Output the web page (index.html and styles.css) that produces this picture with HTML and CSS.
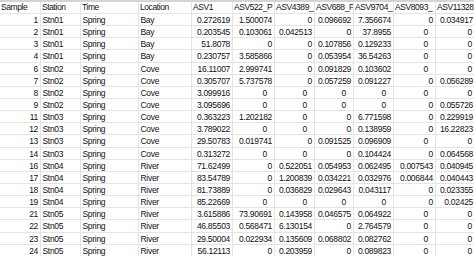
FILE: index.html
```html
<!DOCTYPE html>
<html>
<head>
<meta charset="utf-8">
<link rel="stylesheet" href="styles.css">
</head>
<body>
<div class="topbar"></div>
<div class="sheet">
  <div class="row hdr"><div>Sample</div><div>Station</div><div>Time</div><div>Location</div><div>ASV1</div><div>ASV522_P</div><div>ASV4389_</div><div>ASV688_P</div><div>ASV9704_</div><div>ASV8093_</div><div>ASV11328</div></div>
  <div class="row"><div class="n">1</div><div>Stn01</div><div>Spring</div><div>Bay</div><div class="n">0.272619</div><div class="n">1.500074</div><div class="n">0</div><div class="n">0.096692</div><div class="n">7.356674</div><div class="n">0</div><div class="n">0.034917</div></div>
  <div class="row"><div class="n">2</div><div>Stn01</div><div>Spring</div><div>Bay</div><div class="n">0.203545</div><div class="n">0.103061</div><div class="n">0.042513</div><div class="n">0</div><div class="n">37.8955</div><div class="z">0</div><div class="z">0</div></div>
  <div class="row"><div class="n">3</div><div>Stn01</div><div>Spring</div><div>Bay</div><div class="n">51.8078</div><div class="n">0</div><div class="n">0</div><div class="n">0.107856</div><div class="n">0.129233</div><div class="z">0</div><div class="z">0</div></div>
  <div class="row"><div class="n">4</div><div>Stn01</div><div>Spring</div><div>Bay</div><div class="n">0.230757</div><div class="n">3.585866</div><div class="n">0</div><div class="n">0.053954</div><div class="n">36.54263</div><div class="z">0</div><div class="z">0</div></div>
  <div class="row"><div class="n">6</div><div>Stn02</div><div>Spring</div><div>Cove</div><div class="n">16.11007</div><div class="n">2.999741</div><div class="n">0</div><div class="n">0.091829</div><div class="n">0.103602</div><div class="z">0</div><div class="z">0</div></div>
  <div class="row"><div class="n">7</div><div>Stn02</div><div>Spring</div><div>Cove</div><div class="n">0.305707</div><div class="n">5.737578</div><div class="n">0</div><div class="n">0.057259</div><div class="n">0.091227</div><div class="n">0</div><div class="n">0.056289</div></div>
  <div class="row"><div class="n">8</div><div>Stn02</div><div>Spring</div><div>Cove</div><div class="n">3.099916</div><div class="z">0</div><div class="z">0</div><div class="z">0</div><div class="z">0</div><div class="z">0</div><div class="z">0</div></div>
  <div class="row"><div class="n">9</div><div>Stn02</div><div>Spring</div><div>Cove</div><div class="n">3.095696</div><div class="z">0</div><div class="z">0</div><div class="z">0</div><div class="z">0</div><div class="n">0</div><div class="n">0.055726</div></div>
  <div class="row"><div class="n">11</div><div>Stn03</div><div>Spring</div><div>Cove</div><div class="n">0.363223</div><div class="n">1.202182</div><div class="z">0</div><div class="n">0</div><div class="n">6.771598</div><div class="n">0</div><div class="n">0.229919</div></div>
  <div class="row"><div class="n">12</div><div>Stn03</div><div>Spring</div><div>Cove</div><div class="n">3.789022</div><div class="z">0</div><div class="z">0</div><div class="n">0</div><div class="n">0.138959</div><div class="n">0</div><div class="n">16.22823</div></div>
  <div class="row"><div class="n">13</div><div>Stn03</div><div>Spring</div><div>Cove</div><div class="n">29.50783</div><div class="n">0.019741</div><div class="n">0</div><div class="n">0.091525</div><div class="n">0.096909</div><div class="z">0</div><div class="z">0</div></div>
  <div class="row"><div class="n">14</div><div>Stn03</div><div>Spring</div><div>Cove</div><div class="n">0.313272</div><div class="z">0</div><div class="z">0</div><div class="n">0</div><div class="n">0.104424</div><div class="n">0</div><div class="n">0.064568</div></div>
  <div class="row"><div class="n">16</div><div>Stn04</div><div>Spring</div><div>River</div><div class="n">71.62499</div><div class="n">0</div><div class="n">0.522051</div><div class="n">0.054953</div><div class="n">0.062495</div><div class="n">0.007543</div><div class="n">0.040945</div></div>
  <div class="row"><div class="n">17</div><div>Stn04</div><div>Spring</div><div>River</div><div class="n">83.54789</div><div class="n">0</div><div class="n">1.200839</div><div class="n">0.034221</div><div class="n">0.032976</div><div class="n">0.006844</div><div class="n">0.040443</div></div>
  <div class="row"><div class="n">18</div><div>Stn04</div><div>Spring</div><div>River</div><div class="n">81.73889</div><div class="n">0</div><div class="n">0.036829</div><div class="n">0.029643</div><div class="n">0.043117</div><div class="n">0</div><div class="n">0.023355</div></div>
  <div class="row"><div class="n">19</div><div>Stn04</div><div>Spring</div><div>River</div><div class="n">85.22669</div><div class="z">0</div><div class="z">0</div><div class="z">0</div><div class="z">0</div><div class="n">0</div><div class="n">0.02425</div></div>
  <div class="row"><div class="n">21</div><div>Stn05</div><div>Spring</div><div>River</div><div class="n">3.615886</div><div class="n">73.90691</div><div class="n">0.143958</div><div class="n">0.046575</div><div class="n">0.064922</div><div class="z">0</div><div class="z">0</div></div>
  <div class="row"><div class="n">22</div><div>Stn05</div><div>Spring</div><div>River</div><div class="n">46.85503</div><div class="n">0.568471</div><div class="n">6.130154</div><div class="n">0</div><div class="n">2.764579</div><div class="z">0</div><div class="z">0</div></div>
  <div class="row"><div class="n">23</div><div>Stn05</div><div>Spring</div><div>River</div><div class="n">29.50004</div><div class="n">0.022934</div><div class="n">0.135609</div><div class="n">0.068802</div><div class="n">0.082762</div><div class="z">0</div><div class="z">0</div></div>
  <div class="row"><div class="n">24</div><div>Stn05</div><div>Spring</div><div>River</div><div class="n">56.12113</div><div class="n">0</div><div class="n">0.203959</div><div class="n">0</div><div class="n">0.089823</div><div class="z">0</div><div class="z">0</div></div>
</div>
</body>
</html>
```

FILE: styles.css
```css
html, body {
  margin: 0;
  padding: 0;
  overflow: hidden;
  background: #ffffff;
}
body {
  font-family: "Liberation Sans", Arial, sans-serif;
  font-size: 8.5px;
  letter-spacing: -0.3px;
  color: #111111;
}
.topbar {
  height: 2px;
  background: #d4d4d4;
}
.sheet {
  width: 476px;
}
.row {
  display: grid;
  grid-template-columns: 41px 40px 58px 53px 41px 42px 40px 39px 40px 42px 40px;
  height: 12.15px;
  overflow: hidden;
}
.row.hdr {
  height: 12px;
  letter-spacing: -0.42px;
}
.row > div {
  box-sizing: border-box;
  border-right: 1px solid #e4e4e4;
  border-bottom: 1px solid #e4e4e4;
  padding: 1px 2px 0 1.5px;
  line-height: 11px;
  white-space: nowrap;
  overflow: hidden;
  text-align: left;
}
.row.hdr > div {
  padding-top: 0;
  padding-left: 1px;
}
.row > .n {
  text-align: right;
}
.row > .z {
  text-align: right;
  padding-right: 7px;
}
.row > .z:last-child {
  padding-right: 3px;
}
```
